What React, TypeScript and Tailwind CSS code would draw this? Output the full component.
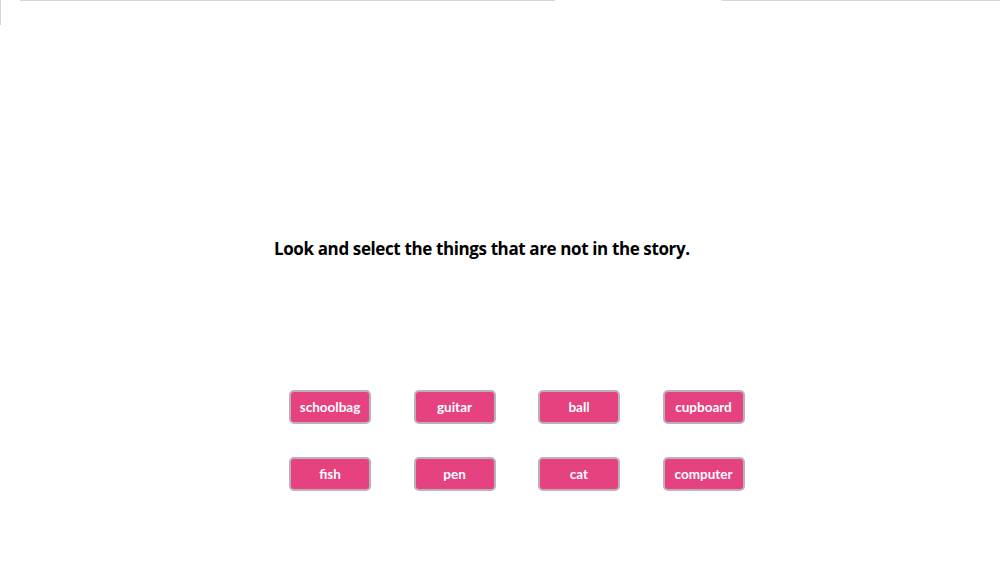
import React, { useState } from 'react'

const words = ['schoolbag', 'guitar', 'ball', 'cupboard', 'fish', 'pen', 'cat', 'computer']

const App: React.FC = () => {
  const [picked, setPicked] = useState<string[]>([])

  const toggle = (w: string) =>
    setPicked((p) => (p.includes(w) ? p.filter((x) => x !== w) : [...p, w]))

  return (
    <div className="w-[1000px] h-[562px] bg-white overflow-hidden">
      {/* frame edges along the top */}
      <div className="flex h-[26px]">
        <div className="w-[2px] h-[25px] border-l border-gray-300" />
        <div className="ml-[18px] w-[535px] h-[2px] border-t border-gray-300" />
        <div className="ml-[167px] flex-1 h-[2px] border-t border-gray-300" />
      </div>

      <h1 className="mt-[212px] ml-[274px] text-[17px] leading-[22px] font-bold text-black font-['Open_Sans',sans-serif] tracking-[-0.38px]">
        Look and select the things that are not in the story.
      </h1>

      <div className="mt-[130px] ml-[289px] grid grid-cols-[repeat(4,82px)] gap-x-[42.5px] gap-y-[33px]">
        {words.map((w) => (
          <button
            key={w}
            onClick={() => toggle(w)}
            className={`h-[34px] rounded-[5px] border-2 border-[#bab0be] text-white text-[13.5px] font-bold font-['Lato',sans-serif] ${
              picked.includes(w) ? 'bg-[#c22e68]' : 'bg-[#e6427f]'
            }`}
          >
            {w}
          </button>
        ))}
      </div>
    </div>
  )
}

export default App
